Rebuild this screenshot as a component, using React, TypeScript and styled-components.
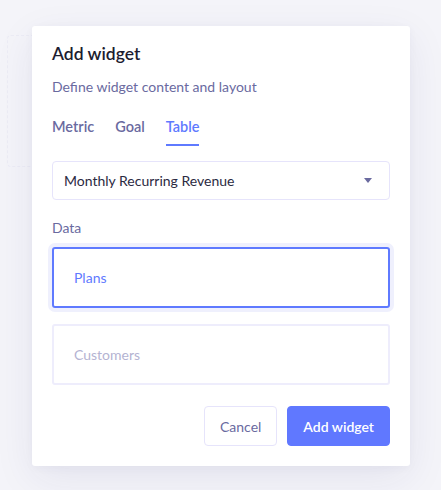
import React, { useState } from 'react';
import styled, { createGlobalStyle } from 'styled-components';

const GlobalStyle = createGlobalStyle`
  html, body {
    margin: 0;
    padding: 0;
    background: #f4f4f9;
  }
  body {
    font-family: Lato, "Noto Sans", sans-serif;
    -webkit-font-smoothing: antialiased;
  }
`;

const Page = styled.div`
  position: relative;
  width: 441px;
  height: 490px;
  overflow: hidden;
  padding: 26px 0 0 32px;
  box-sizing: border-box;
`;

const DropZone = styled.div`
  position: absolute;
  left: 7px;
  top: 35px;
  width: 200px;
  height: 130px;
  border: 1px dashed #ececf5;
  border-radius: 4px;
`;

const Card = styled.div`
  position: relative;
  width: 378px;
  box-sizing: border-box;
  padding: 16px 20px 20px;
  background: #fff;
  border-radius: 3px;
  box-shadow: 0 12px 40px rgba(44, 42, 110, 0.08), 0 2px 8px rgba(44, 42, 110, 0.04);
`;

const Title = styled.h2`
  margin: 0;
  font-size: 17.5px;
  line-height: 24px;
  font-weight: 600;
  color: #1d1c30;
`;

const Subtitle = styled.p`
  margin: 11px 0 0;
  font-size: 14px;
  line-height: 20px;
  color: #6a6a9f;
`;

const Tabs = styled.div`
  display: flex;
  gap: 21px;
  margin-top: 20px;
`;

const Tab = styled.button<{ $active?: boolean }>`
  all: unset;
  cursor: pointer;
  font-size: 14.5px;
  line-height: 20px;
  font-weight: 600;
  padding-bottom: 7px;
  color: ${(p) => (p.$active ? '#5f7aff' : '#6a6a9f')};
  border-bottom: 2px solid ${(p) => (p.$active ? '#5f7aff' : 'transparent')};
`;

const Select = styled.div`
  display: flex;
  align-items: center;
  justify-content: space-between;
  height: 39px;
  margin-top: 15px;
  padding: 0 17px 0 11px;
  box-sizing: border-box;
  border: 1px solid #e6e4fb;
  border-radius: 4px;
  font-size: 14px;
  color: #2b2a42;
`;

const Caret = styled.span`
  width: 0;
  height: 0;
  border-left: 4.5px solid transparent;
  border-right: 4.5px solid transparent;
  border-top: 5px solid #6a6a9f;
`;

const Label = styled.div`
  margin-top: 18px;
  font-size: 14px;
  line-height: 20px;
  color: #6a6a9f;
`;

const Options = styled.div`
  display: flex;
  flex-direction: column;
  gap: 16px;
  margin-top: 9px;
`;

const Option = styled.div<{ $selected?: boolean }>`
  display: flex;
  align-items: center;
  height: 61px;
  box-sizing: border-box;
  padding: 0 20px;
  border-radius: 3px;
  font-size: 14px;
  cursor: pointer;
  border: ${(p) => (p.$selected ? '2px solid #5f7aff' : '2px solid #eeedfc')};
  color: ${(p) => (p.$selected ? '#5f7aff' : '#b4b3d2')};
  box-shadow: ${(p) => (p.$selected ? '0 0 0 4px #eff0fd' : 'none')};
`;

const Footer = styled.div`
  display: flex;
  justify-content: flex-end;
  gap: 10px;
  margin-top: 21px;
`;

const Button = styled.button<{ $primary?: boolean }>`
  height: 40px;
  padding: 0 15px;
  border-radius: 4px;
  font-family: inherit;
  font-size: 14px;
  font-weight: ${(p) => (p.$primary ? 600 : 400)};
  cursor: pointer;
  border: 1px solid ${(p) => (p.$primary ? '#6078ff' : '#e6e4fb')};
  background: ${(p) => (p.$primary ? '#6078ff' : '#fff')};
  color: ${(p) => (p.$primary ? '#fff' : '#6a6a9f')};
`;

const tabs = ['Metric', 'Goal', 'Table'];
const sources = ['Plans', 'Customers'];

export default function App() {
  const [tab, setTab] = useState('Table');
  const [source, setSource] = useState('Plans');

  return (
    <>
      <GlobalStyle />
      <Page>
        <DropZone />
        <Card>
          <Title>Add widget</Title>
          <Subtitle>Define widget content and layout</Subtitle>
          <Tabs>
            {tabs.map((t) => (
              <Tab key={t} $active={t === tab} onClick={() => setTab(t)}>
                {t}
              </Tab>
            ))}
          </Tabs>
          <Select>
            Monthly Recurring Revenue
            <Caret />
          </Select>
          <Label>Data</Label>
          <Options>
            {sources.map((s) => (
              <Option key={s} $selected={s === source} onClick={() => setSource(s)}>
                {s}
              </Option>
            ))}
          </Options>
          <Footer>
            <Button>Cancel</Button>
            <Button $primary>Add widget</Button>
          </Footer>
        </Card>
      </Page>
    </>
  );
}
